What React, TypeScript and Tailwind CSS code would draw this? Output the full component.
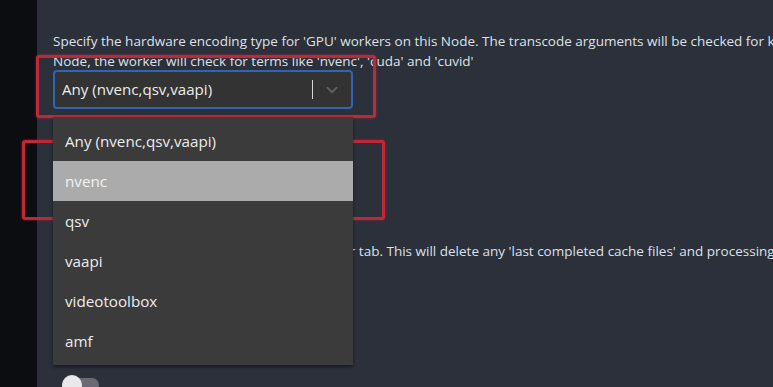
import { ChevronDown } from "lucide-react";

const options = ["Any (nvenc,qsv,vaapi)", "nvenc", "qsv", "vaapi", "videotoolbox", "amf"];

export default function App() {
  return (
    <div
      className="flex h-[387px] w-[773px] overflow-hidden bg-[#2b303b] text-[13.5px] text-[#dde1e8]"
      style={{ fontFamily: '"Open Sans", "Noto Sans", sans-serif' }}
    >
      <div className="w-[37px] shrink-0 bg-[#0c0d11]" />
      <div className="relative min-w-0 flex-1 pl-[16px] pt-[31px]">
        <p className="whitespace-nowrap leading-5">
          Specify the hardware encoding type for 'GPU' workers on this Node. The transcode arguments will be checked for keywords
        </p>
        <p className="whitespace-nowrap leading-5">
          Node, the worker will check for terms like 'nvenc', 'cuda' and 'cuvid'
        </p>

        <div className="relative z-10 -mt-px w-[300px]">
          <div className="flex h-[39px] items-center rounded-[4px] border-2 border-[#2f66b3] bg-[#333333] pl-[7px] pr-[10px]">
            <span className="flex-1 text-[15.1px] text-[#ececec]">Any (nvenc,qsv,vaapi)</span>
            <span className="h-[19px] w-px bg-[#d8d8d8]" />
            <ChevronDown className="ml-[10px] size-[18px] text-[#5f5f5f]" strokeWidth={2.5} />
          </div>

          <ul className="absolute left-0 top-[47px] w-full bg-[#3b3b3b] py-1 shadow-[0_2px_3px_rgba(0,0,0,0.45)]">
            {options.map((option) => (
              <li
                key={option}
                className={`flex h-[40px] items-center px-[12px] text-[15.2px] ${
                  option === "nvenc" ? "bg-[#ababab] text-[#f2f2f2]" : "text-[#ececec]"
                }`}
              >
                {option}
              </li>
            ))}
          </ul>
        </div>

        <p className="mt-[132px] whitespace-nowrap leading-5">
          Clear this Node's cache folders using the worker tab. This will delete any 'last completed cache files' and processing files
        </p>

        <div className="relative mt-[114px] ml-[9px] h-[20px] w-[37px]">
          <div className="absolute left-0 top-[3px] h-[14px] w-[37px] rounded-full bg-[#686b73]" />
          <div className="absolute left-0 top-0 size-[20px] rounded-full bg-[#e9e9ec]" />
        </div>

        <div className="pointer-events-none absolute left-[-1px] top-[55px] h-[63px] w-[340px] rounded-[3px] border-[3px] border-[#c0283a] shadow-[0_0_3px_rgba(192,40,58,0.6)]" />
        <div className="pointer-events-none absolute left-[-15px] top-[140px] h-[80px] w-[363px] rounded-[3px] border-[3px] border-[#c0283a] shadow-[0_0_3px_rgba(192,40,58,0.6)]" />
      </div>
    </div>
  );
}
